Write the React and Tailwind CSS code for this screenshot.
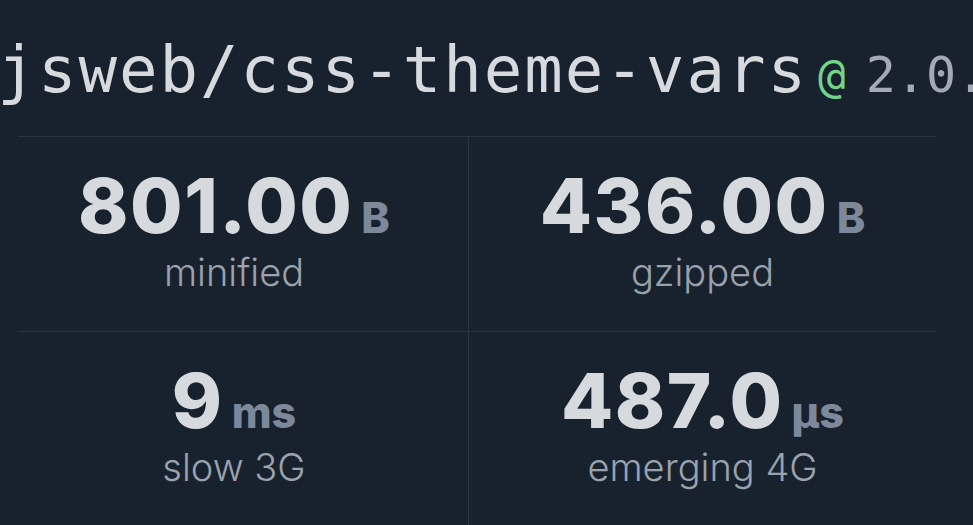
const stats = [
  [
    { value: "801.00", unit: "B", label: "minified" },
    { value: "436.00", unit: "B", label: "gzipped" },
  ],
  [
    { value: "9", unit: "ms", label: "slow 3G" },
    { value: "487.0", unit: "µs", label: "emerging 4G" },
  ],
];

function Stat({ value, unit, label, divider }) {
  return (
    <div
      className={
        "flex h-[194px] flex-col items-center pt-[30px] " +
        (divider ? "border-l border-[#2a3441]" : "")
      }
    >
      <div className="flex items-baseline leading-none">
        <span className="text-[76px] font-extrabold text-[#d6d9de] tracking-[1.5px]">{value}</span>
        <span className="ml-[8px] text-[43px] font-extrabold text-[#7d899b]">{unit}</span>
      </div>
      <div className="mt-[10px] text-[38px] font-light leading-none text-[#9aa2ad]">{label}</div>
    </div>
  );
}

export default function App() {
  return (
    <div
      className="h-[525px] w-full overflow-hidden bg-[#18222f]"
      style={{ fontFamily: "Inter, 'Noto Sans', sans-serif" }}
    >
      {/* package name, centered and spilling off both edges */}
      <div
        className="flex h-[136px] items-baseline justify-center whitespace-nowrap pt-[38px] leading-none"
        style={{ fontFamily: "'DejaVu Sans Mono', 'Liberation Mono', monospace" }}
      >
        <span className="text-[64px] tracking-[2px] text-[#d6d9de]">@jsweb/css-theme-vars</span>
        <span className="ml-[10px] text-[46px] text-[#74d48c]">@</span>
        <span className="ml-[20px] text-[50px] text-[#a3aab5]">2.0.1</span>
      </div>

      <div className="w-[936px]">
        {stats.map((row, i) => (
          <div key={i}>
            <div className="ml-[18px] h-px bg-[#2a3441]" />
            <div className="grid grid-cols-[468px_468px]">
              {row.map((s, j) => (
                <Stat key={s.label} {...s} divider={j === 1} />
              ))}
            </div>
          </div>
        ))}
      </div>
    </div>
  );
}
